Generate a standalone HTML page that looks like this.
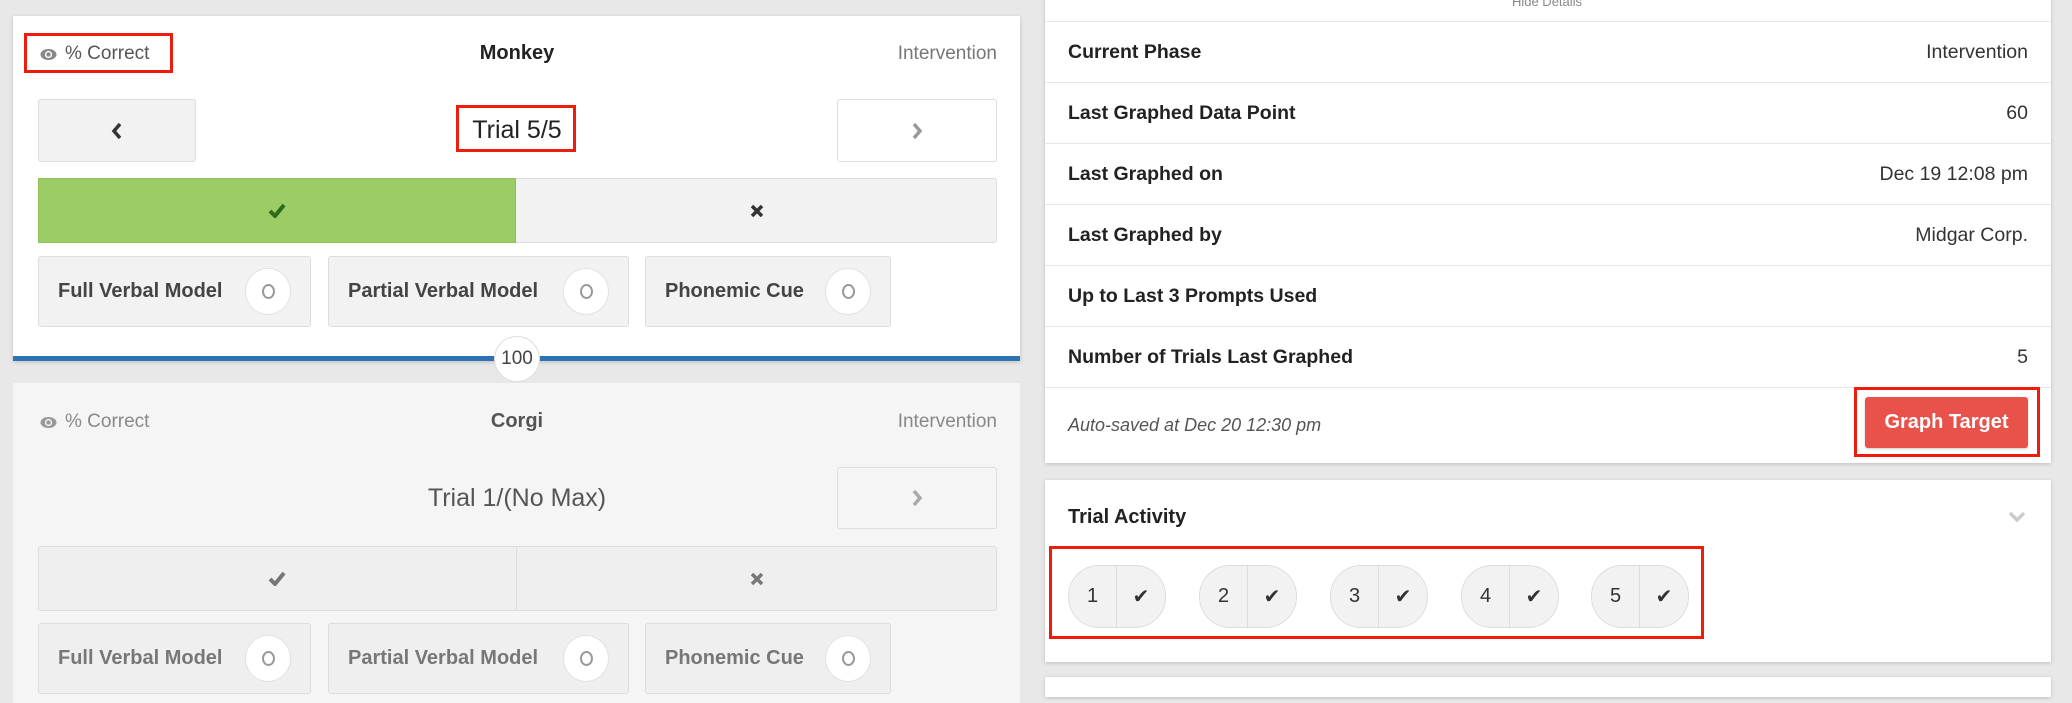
<!DOCTYPE html>
<html><head><meta charset="utf-8"><style>
*{box-sizing:border-box;margin:0;padding:0}
body{width:2072px;height:680px;background:#e8e8e8;font-family:"Liberation Sans",sans-serif;position:relative;overflow:hidden;color:#333}
.a{position:absolute}
.card{position:absolute;background:#fff;box-shadow:0 1px 4px rgba(0,0,0,.18)}
.btn{position:absolute;border:1px solid #ddd;border-radius:3px;background:#f2f2f2}
.c{display:flex;align-items:center;justify-content:center}
.rb{position:absolute;border:3px solid #ee1c0c}
.pr{position:absolute;border:1px solid #ddd;border-radius:3px;background:#f2f2f2;height:71px;font-size:20px;font-weight:bold;color:#444;padding-left:19px;display:flex;align-items:center}
.pr .o{position:absolute;right:19px;top:11px;width:46px;height:47px;border-radius:50%;background:#fff;border:1px solid #e2e2e2;display:flex;align-items:center;justify-content:center}
.pr .o i{width:13px;height:15px;border:2px solid #999;border-radius:50%}
.row{position:absolute;left:0;right:0;border-top:1px solid #e6e6e6;display:flex;align-items:center;justify-content:space-between;padding:0 23px;font-size:19.5px}
.row b{color:#222}
.pill{position:absolute;top:565px;width:98px;height:63px;border:1px solid #ddd;border-radius:31px;background:#f2f2f2;overflow:hidden;font-size:20px}
.pill span{position:absolute;top:0;bottom:0;display:flex;align-items:center;justify-content:center}
</style></head><body>

<!-- Card 1 -->
<div class="card" style="left:13px;top:16px;width:1007px;height:345px;border-bottom:5px solid #2f72b3"></div>
<div class="a" style="left:40px;top:43px;font-size:19px;color:#555;display:flex;align-items:center;gap:8px">
<svg width="17" height="13" viewBox="0 0 17 13"><ellipse cx="8.5" cy="6.5" rx="8" ry="5.5" fill="#888"/><circle cx="8.5" cy="6.5" r="3.6" fill="#fff"/><circle cx="8.5" cy="6.5" r="2.2" fill="#888"/></svg>% Correct</div>
<div class="rb" style="left:24px;top:33px;width:149px;height:40px"></div>
<div class="a" style="left:417px;width:200px;text-align:center;top:42px;font-size:20px;font-weight:bold;color:#222">Monkey</div>
<div class="a" style="right:1075px;top:43px;font-size:19px;color:#777">Intervention</div>
<div class="btn c" style="left:38px;top:99px;width:158px;height:63px"><svg width="12" height="20" viewBox="0 0 12 20"><path d="M9 3L3 10l6 7" stroke="#333" stroke-width="3.5" fill="none"/></svg></div>
<div class="btn c" style="left:837px;top:99px;width:160px;height:63px;background:#fff"><svg width="12" height="20" viewBox="0 0 12 20"><path d="M3 3l6 7-6 7" stroke="#999" stroke-width="3.5" fill="none"/></svg></div>
<div class="a" style="left:417px;width:200px;text-align:center;top:116px;font-size:25px;color:#222">Trial 5/5</div>
<div class="rb" style="left:456px;top:105px;width:120px;height:47px"></div>
<div class="btn" style="left:38px;top:178px;width:959px;height:65px"></div>
<div class="a c" style="left:38px;top:178px;width:478px;height:65px;background:#9ccc65;border:1px solid #8fc05a"><svg width="18" height="15" viewBox="0 0 18 15"><path d="M2 8l5 5L16 2" stroke="#2d6a1c" stroke-width="4" fill="none"/></svg></div>
<div class="a c" style="left:516px;top:178px;width:481px;height:65px"><svg width="14" height="14" viewBox="0 0 14 14"><path d="M2 2l10 10M12 2L2 12" stroke="#333" stroke-width="3.5"/></svg></div>
<div class="pr" style="left:38px;top:256px;width:273px">Full Verbal Model<div class="o"><i></i></div></div>
<div class="pr" style="left:328px;top:256px;width:301px">Partial Verbal Model<div class="o"><i></i></div></div>
<div class="pr" style="left:645px;top:256px;width:246px">Phonemic Cue<div class="o"><i></i></div></div>
<div class="a c" style="left:494px;top:336px;width:46px;height:46px;border-radius:50%;background:#fff;border:1px solid #ddd;font-size:19px;color:#444">100</div>

<!-- Card 2 -->
<div class="card" style="left:13px;top:383px;width:1007px;height:320px;background:#f5f5f5;box-shadow:none"></div>
<div class="a" style="left:40px;top:411px;font-size:19px;color:#888;display:flex;align-items:center;gap:8px">
<svg width="17" height="13" viewBox="0 0 17 13"><ellipse cx="8.5" cy="6.5" rx="8" ry="5.5" fill="#999"/><circle cx="8.5" cy="6.5" r="3.6" fill="#f5f5f5"/><circle cx="8.5" cy="6.5" r="2.2" fill="#999"/></svg>% Correct</div>
<div class="a" style="left:417px;width:200px;text-align:center;top:410px;font-size:20px;font-weight:bold;color:#555">Corgi</div>
<div class="a" style="right:1075px;top:411px;font-size:19px;color:#888">Intervention</div>
<div class="btn c" style="left:837px;top:467px;width:160px;height:62px;background:#f5f5f5"><svg width="12" height="20" viewBox="0 0 12 20"><path d="M3 3l6 7-6 7" stroke="#aaa" stroke-width="3.5" fill="none"/></svg></div>
<div class="a" style="left:367px;width:300px;text-align:center;top:484px;font-size:25px;color:#555">Trial 1/(No Max)</div>
<div class="btn" style="left:38px;top:546px;width:959px;height:65px;background:#efefef"></div>
<div class="a" style="left:516px;top:546px;width:1px;height:65px;background:#ddd"></div>
<div class="a c" style="left:38px;top:546px;width:478px;height:65px"><svg width="18" height="15" viewBox="0 0 18 15"><path d="M2 8l5 5L16 2" stroke="#777" stroke-width="4" fill="none"/></svg></div>
<div class="a c" style="left:516px;top:546px;width:481px;height:65px"><svg width="14" height="14" viewBox="0 0 14 14"><path d="M2 2l10 10M12 2L2 12" stroke="#777" stroke-width="3.5"/></svg></div>
<div class="pr" style="left:38px;top:623px;width:273px;color:#777;background:#efefef">Full Verbal Model<div class="o"><i></i></div></div>
<div class="pr" style="left:328px;top:623px;width:301px;color:#777;background:#efefef">Partial Verbal Model<div class="o"><i></i></div></div>
<div class="pr" style="left:645px;top:623px;width:246px;color:#777;background:#efefef">Phonemic Cue<div class="o"><i></i></div></div>

<!-- Right card 1 -->
<div class="card" style="left:1045px;top:-10px;width:1006px;height:473px"></div>
<div class="a" style="left:1447px;width:200px;text-align:center;top:-6px;font-size:13px;color:#888">Hide Details</div>
<div class="a" style="left:1045px;width:1006px;top:21px;height:425px">
<div class="row" style="top:0;height:61px"><b>Current Phase</b><span>Intervention</span></div>
<div class="row" style="top:61px;height:61px"><b>Last Graphed Data Point</b><span>60</span></div>
<div class="row" style="top:122px;height:61px"><b>Last Graphed on</b><span>Dec 19 12:08 pm</span></div>
<div class="row" style="top:183px;height:61px"><b>Last Graphed by</b><span>Midgar Corp.</span></div>
<div class="row" style="top:244px;height:61px"><b>Up to Last 3 Prompts Used</b><span></span></div>
<div class="row" style="top:305px;height:61px"><b>Number of Trials Last Graphed</b><span>5</span></div>
<div class="row" style="top:366px;height:76px"><i style="color:#555;font-size:18px">Auto-saved at Dec 20 12:30 pm</i><span></span></div>
</div>
<div class="a c" style="left:1865px;top:397px;width:163px;height:51px;background:#e8524a;border-radius:3px;color:#fff;font-weight:bold;font-size:20px;box-shadow:0 1px 2px rgba(0,0,0,.2)">Graph Target</div>
<div class="rb" style="left:1854px;top:387px;width:186px;height:70px"></div>

<!-- Trial Activity -->
<div class="card" style="left:1045px;top:480px;width:1006px;height:182px"></div>
<div class="a" style="left:1068px;top:506px;font-size:20px;font-weight:bold;color:#222">Trial Activity</div>
<svg class="a" style="left:2008px;top:511px" width="18" height="12" viewBox="0 0 18 12"><path d="M2 2l7 7 7-7" stroke="#ccc" stroke-width="3.5" fill="none"/></svg>
<div class="pill" style="left:1068px"><span style="left:0;width:47px">1</span><span style="left:47px;right:0;border-left:1px solid #ddd">✔</span></div>
<div class="pill" style="left:1199px"><span style="left:0;width:47px">2</span><span style="left:47px;right:0;border-left:1px solid #ddd">✔</span></div>
<div class="pill" style="left:1330px"><span style="left:0;width:47px">3</span><span style="left:47px;right:0;border-left:1px solid #ddd">✔</span></div>
<div class="pill" style="left:1461px"><span style="left:0;width:47px">4</span><span style="left:47px;right:0;border-left:1px solid #ddd">✔</span></div>
<div class="pill" style="left:1591px"><span style="left:0;width:47px">5</span><span style="left:47px;right:0;border-left:1px solid #ddd">✔</span></div>
<div class="rb" style="left:1049px;top:546px;width:655px;height:93px"></div>

<div class="card" style="left:1045px;top:677px;width:1006px;height:20px"></div>
</body></html>
